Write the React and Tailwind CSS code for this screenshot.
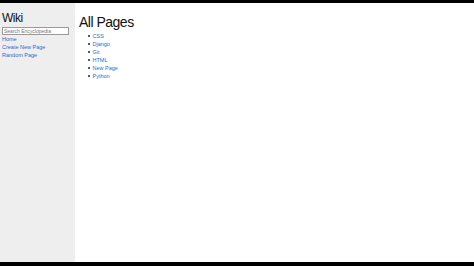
export default function App() {
  const pages = ["CSS", "Django", "Git", "HTML", "New Page", "Python"];
  return (
    <div className="w-[474px] h-[266px] flex flex-col bg-black overflow-hidden" style={{ fontFamily: '"Liberation Sans", Arial, sans-serif' }}>
      <div className="h-[3px] shrink-0 bg-black" />
      <div className="flex flex-1 bg-white">
        <div className="w-[75px] shrink-0 bg-[#eeeeee] pl-[2px] pt-[9px]">
          <div className="text-[12px] leading-[13px] tracking-[-0.5px] text-[#111]">Wiki</div>
          <div className="mt-[2px] w-[67px] h-[8px] border border-[#9a9a9a] bg-white text-[5px] leading-[6px] text-[#777] pl-[1px]">Search Encyclopedia</div>
          <div className="flex flex-col text-[5.5px] leading-[8px] text-[#1a6fd0]">
            <span>Home</span>
            <span>Create New Page</span>
            <span>Random Page</span>
          </div>
        </div>
        <div className="flex-1 pl-[4px] pt-[11px]">
          <div className="text-[14px] leading-[16px] tracking-[-0.5px] text-[#111]">All Pages</div>
          <ul className="mt-[2px] pl-[9px] flex flex-col text-[5.5px] leading-[8px]">
            {pages.map((p) => (
              <li key={p} className="flex items-center gap-[2.5px]">
                <span className="w-[2px] h-[2px] rounded-full bg-[#222]" />
                <span className="text-[#1a6fd0]">{p}</span>
              </li>
            ))}
          </ul>
        </div>
      </div>
      <div className="h-[4px] shrink-0 bg-black" />
    </div>
  );
}
